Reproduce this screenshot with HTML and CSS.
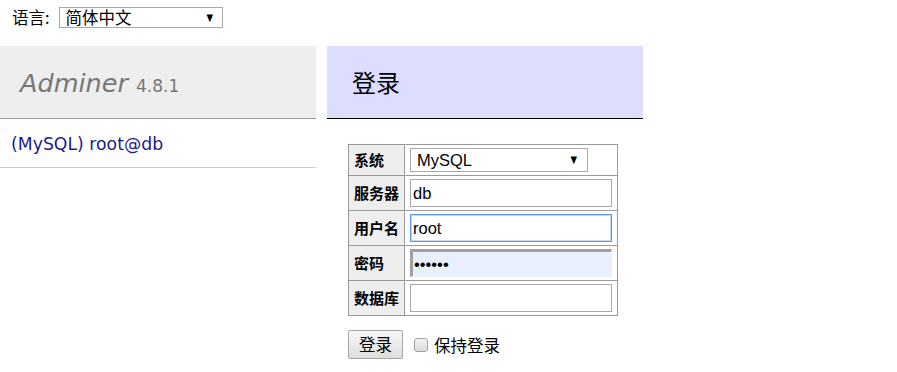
FILE: index.html
```
<!DOCTYPE html>
<html lang="zh-CN">
<head>
<meta charset="utf-8">
<title>登录 - Adminer</title>
<link rel="stylesheet" href="styles.css">
</head>
<body>
<div class="lang">
  <span class="lang-label">语言:</span>
  <span class="select-wrap lang-select-wrap">
    <select class="lang-select"><option>简体中文</option></select>
    <span class="arrow">▼</span>
  </span>
</div>
<div class="page">
  <div class="menu">
    <h1 class="brand"><span class="brand-name">Adminer</span> <span class="version">4.8.1</span></h1>
    <p class="logins"><a class="login-link" href="#">(MySQL) root@db</a></p>
  </div>
  <div class="content">
    <h2 class="title">登录</h2>
    <form class="login-form">
      <table class="login-table">
        <tr>
          <th>系统</th>
          <td>
            <span class="select-wrap driver-wrap">
              <select class="driver-select"><option>MySQL</option></select>
              <span class="arrow">▼</span>
            </span>
          </td>
        </tr>
        <tr>
          <th>服务器</th>
          <td><input class="field" type="text" value="db"></td>
        </tr>
        <tr>
          <th>用户名</th>
          <td><input class="field field-focus" type="text" value="root"></td>
        </tr>
        <tr>
          <th>密码</th>
          <td><input class="field field-auto" type="password" value="secret"></td>
        </tr>
        <tr>
          <th>数据库</th>
          <td><input class="field" type="text" value=""></td>
        </tr>
      </table>
      <p class="actions">
        <button class="submit" type="button">登录</button>
        <label class="remember"><input class="check" type="checkbox"><span>保持登录</span></label>
      </p>
    </form>
  </div>
</div>
</body>
</html>
```
FILE: styles.css
```
html, body {
  margin: 0;
  padding: 0;
  background: #fff;
}
body {
  color: #000;
  font: 16.5px/1.25 "DejaVu Sans", Verdana, "Noto Sans CJK SC", sans-serif;
}
.lang {
  height: 46px;
  box-sizing: border-box;
  padding: 7px 0 0 12px;
  display: flex;
  align-items: flex-start;
  font-family: "Noto Sans CJK SC", sans-serif;
}
.lang-label {
  font-size: 16.5px;
  line-height: 21px;
  margin-right: 9px;
}
.select-wrap {
  position: relative;
  display: inline-block;
}
.select-wrap select {
  -webkit-appearance: none;
  appearance: none;
  background: #fff;
  border: 1px solid #a9a9a9;
  border-radius: 0;
  margin: 0;
  color: #000;
  box-sizing: border-box;
  display: block;
}
.arrow {
  position: absolute;
  top: 50%;
  transform: translateY(-50%) scaleX(0.85);
  font-size: 10px;
  line-height: 10px;
  color: #000;
  pointer-events: none;
  font-family: "DejaVu Sans", sans-serif;
}
.lang-select {
  width: 164px;
  height: 21px;
  font: 16.5px/19px "Noto Sans CJK SC", sans-serif;
  padding: 0 0 0 6px;
  overflow: hidden;
}
.lang-select-wrap .arrow {
  right: 9px;
}
.page {
  display: flex;
  align-items: flex-start;
}
.menu {
  width: 316px;
  flex: none;
}
.brand, .title {
  margin: 0;
  height: 73px;
  box-sizing: border-box;
  padding: 20px 0 0 20px;
  font-size: 25px;
  line-height: 31px;
  font-weight: normal;
}
.brand {
  background: #eee;
  border-bottom: 1px solid #999;
  color: #777;
  padding-top: 22px;
  font-size: 25.5px;
}
.brand-name {
  font-style: italic;
}
.version {
  font-size: 17px;
  color: #777;
}
.logins {
  margin: 0;
  height: 49px;
  box-sizing: border-box;
  padding: 14px 0 0 11px;
  border-bottom: 1px solid #ccc;
  font-size: 17.3px;
  line-height: 22px;
}
.login-link {
  color: #1c1c86;
  text-decoration: none;
}
.content {
  margin-left: 11px;
  width: 316px;
  flex: none;
}
.title {
  background: #ddf;
  border-bottom: 1px solid #000;
  color: #000;
  padding-left: 25px;
  font-family: "Noto Sans CJK SC", sans-serif;
  font-size: 24px;
  line-height: 32px;
}
.login-form {
  margin: 25px 0 0 21px;
}
.login-table {
  border-collapse: collapse;
  border: 1px solid #999;
}
.login-table th, .login-table td {
  border: 1px solid #999;
  padding: 3px 5px;
  vertical-align: middle;
}
.login-table th {
  background: #eee;
  text-align: left;
  font: bold 15px/20px "Noto Sans CJK SC", sans-serif;
  padding: 3px 5px 3px 5px;
}
.driver-select {
  width: 178px;
  height: 24px;
  font: 16.5px/22px "Liberation Sans", Arial, sans-serif;
  padding: 0 0 0 6px;
}
.driver-wrap .arrow {
  right: 10px;
}
.field {
  display: block;
  width: 202px;
  height: 28px;
  box-sizing: border-box;
  margin: 0;
  border: 1px solid #a9a9a9;
  padding: 0 2px;
  font: 16.5px "Liberation Sans", Arial, sans-serif;
  color: #000;
  background: #fff;
  outline: none;
}
.field-focus {
  border: 1px solid #5f98ea;
  box-shadow: inset 0 0 0 1px #c2d7f5;
}
.field-auto {
  background: #e8f0fe;
  border-top: 3px solid #a0a0a0;
  border-left: 3px solid #a0a0a0;
  border-right: 1px solid #e8f0fe;
  border-bottom: 1px solid #e8f0fe;
  padding: 0 1px;
  font-size: 16.5px;
  letter-spacing: 0;
}
.actions {
  margin: 14px 0 0;
  display: flex;
  align-items: center;
}
.submit {
  -webkit-appearance: none;
  appearance: none;
  width: 55px;
  height: 29px;
  padding: 0;
  margin: 0;
  border: 1px solid #a6a6a6;
  border-radius: 2px;
  background: linear-gradient(#f7f7f7, #dddddd);
  color: #000;
  font: 16.5px/1 "Noto Sans CJK SC", sans-serif;
}
.remember {
  display: flex;
  align-items: center;
  margin-left: 11px;
  font: 16.5px/20px "Noto Sans CJK SC", sans-serif;
}
.check {
  -webkit-appearance: none;
  appearance: none;
  width: 14px;
  height: 14px;
  margin: 1px 6px 0 0;
  box-sizing: border-box;
  border: 1px solid #a3a3a3;
  border-radius: 3px;
  background: linear-gradient(#f3f3f3, #dcdcdc);
}
```
